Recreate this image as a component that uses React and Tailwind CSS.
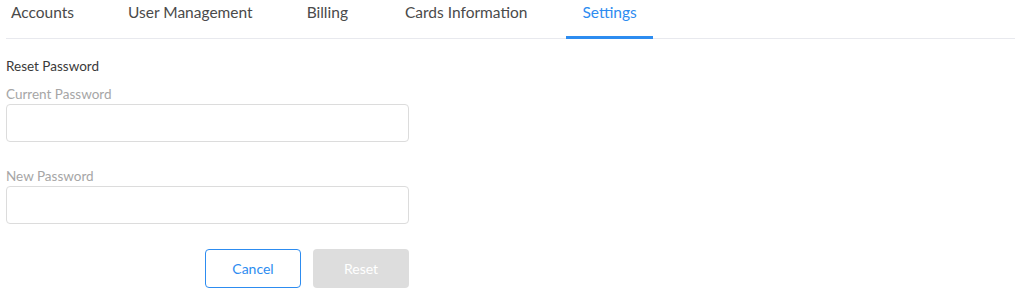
export default function App() {
  const tabs = [
    { t: "Accounts", c: "pl-[5px] pr-4" },
    { t: "User Management", c: "px-4 ml-[22px]" },
    { t: "Billing", c: "px-4 ml-[22px]" },
    { t: "Cards Information", c: "px-4 ml-[25px]" },
    { t: "Settings", c: "px-4 ml-[23px]" },
  ];
  return (
    <div className="w-[1024px] h-[297px] bg-white overflow-hidden" style={{ fontFamily: "Lato, 'Open Sans', sans-serif" }}>
      <div className="ml-[6px] mr-[9px] h-[39px] flex border-b border-[#e8e9ee]">
        {tabs.map(({ t, c }) => {
          const active = t === "Settings";
          return (
            <div
              key={t}
              className={
                "h-[39px] -mb-px text-[15.5px] leading-[24px] " +
                c +
                " " +
                (active ? "text-[#2d8cf0] border-b-[3px] border-[#2d8cf0]" : "text-[#4a4a4a]")
              }
            >
              {t}
            </div>
          );
        })}
      </div>
      <div className="ml-[6px] w-[403px] pt-[17px]">
        <div className="text-[13.5px] leading-[20px] text-[#3a3a3a]">Reset Password</div>
        <div className="mt-2 text-[13.5px] leading-[20px] text-[#a6a6a6]">Current Password</div>
        <div className="h-[38px] rounded border border-[#dcdcdc]" />
        <div className="mt-6 text-[13.5px] leading-[20px] text-[#a6a6a6]">New Password</div>
        <div className="h-[38px] rounded border border-[#dcdcdc]" />
        <div className="mt-[25px] flex justify-end gap-3">
          <button className="w-[96px] h-[39px] rounded border border-[#2d8cf0] text-[#2d8cf0] text-[14px]">Cancel</button>
          <button className="w-[96px] h-[39px] rounded bg-[#dddddd] text-white text-[14px]">Reset</button>
        </div>
      </div>
    </div>
  );
}
